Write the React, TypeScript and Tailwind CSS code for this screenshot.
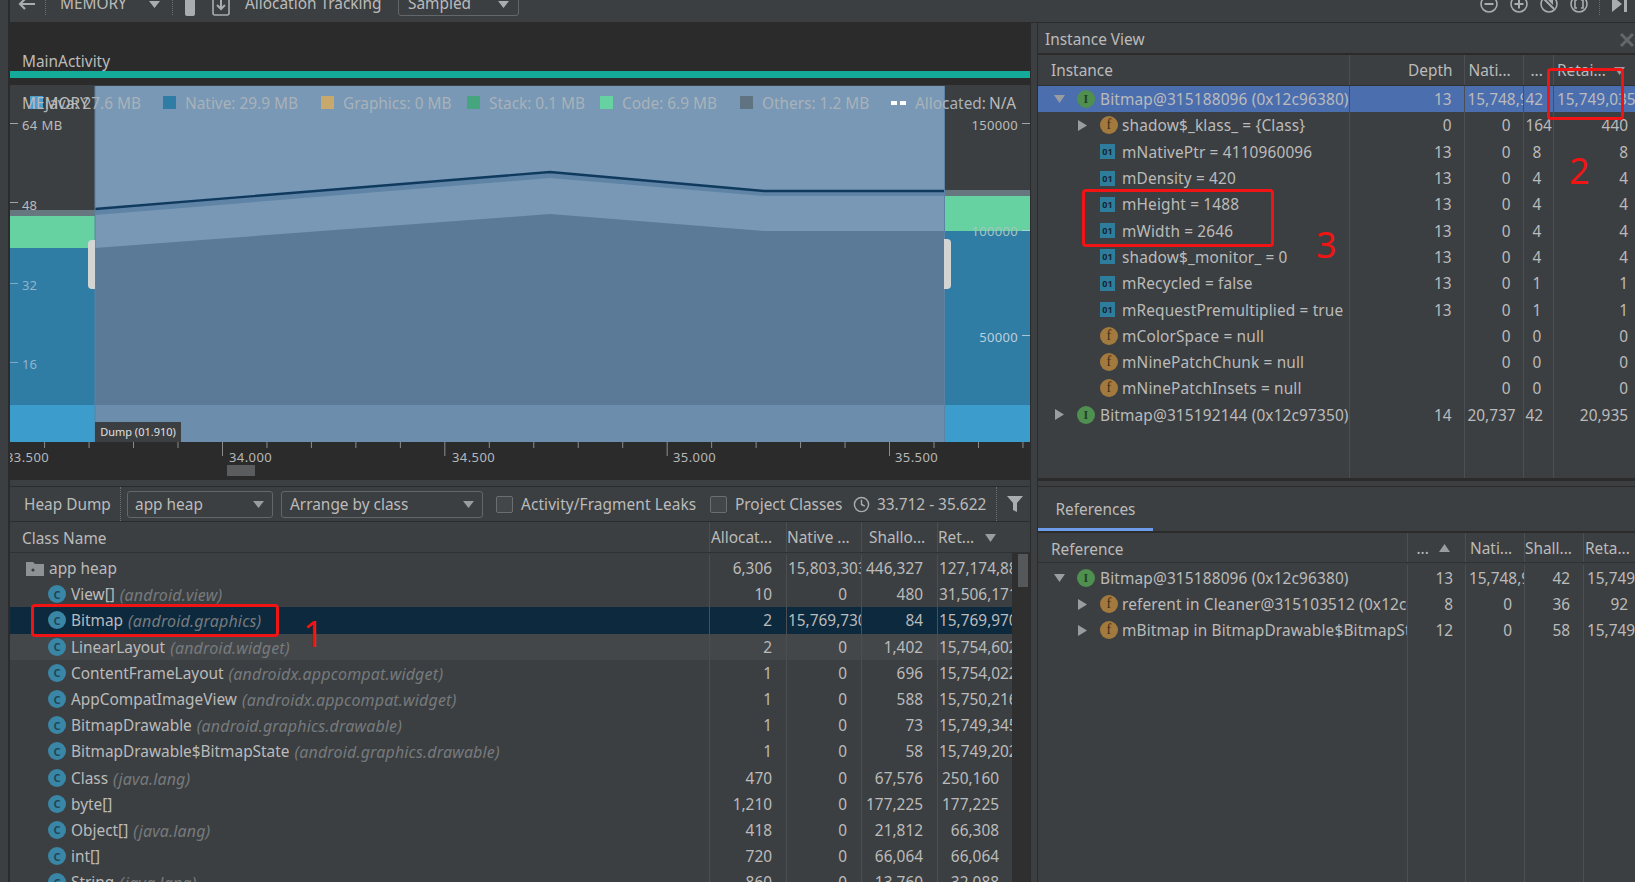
import { clsx } from "clsx";
import type { ReactNode } from "react";
import { Clock } from "lucide-react";

type Kind = "c" | "f" | "i" | "o";

function Tri({ dir, className }: { dir: "d" | "r" | "u"; className?: string }) {
  const pts = dir === "d" ? "0,1 11,1 5.5,9" : dir === "r" ? "1,0 10,5.5 1,11" : "0,9 11,9 5.5,1";
  return (
    <svg viewBox="0 0 11 11" className={clsx("h-[11px] w-[11px] shrink-0", className)}>
      <polygon points={pts} fill="#9a9da0" />
    </svg>
  );
}

function TypeIcon({ kind }: { kind: Kind }) {
  if (kind === "o") {
    return (
      <div className="flex h-[15px] w-[15px] shrink-0 items-center justify-center bg-[#2f7d9c] text-[9px] font-bold leading-none text-[#16262e]">
        01
      </div>
    );
  }
  if (kind === "c") {
    return (
      <div className="flex h-[18px] w-[18px] shrink-0 items-center justify-center rounded-full bg-[#3a86a6] text-[11px] font-bold leading-none text-[#1f4657]">
        C
      </div>
    );
  }
  if (kind === "f") {
    return (
      <div className="flex h-[18px] w-[18px] shrink-0 items-center justify-center rounded-full bg-[#a37a3e] font-['Liberation_Serif',serif] text-[14px] leading-none text-[#3a2c18]">
        f
      </div>
    );
  }
  return (
    <div className="flex h-[18px] w-[18px] shrink-0 items-center justify-center rounded-full bg-[#4f8f4f] font-['Liberation_Serif',serif] text-[12px] font-bold leading-none text-[#223f22]">
      I
    </div>
  );
}

function Cell({ className, left, children }: { className?: string; left?: boolean; children?: ReactNode }) {
  return (
    <div
      className={clsx(
        "flex h-full shrink-0 items-center overflow-hidden whitespace-nowrap border-l border-[#4c4f51] pt-[2px]",
        left ? "justify-start" : "justify-end",
        className,
      )}
    >
      {children}
    </div>
  );
}

const classRows = [
  ["View[]", "(android.view)", "10", "0", "480", "31,506,171"],
  ["Bitmap", "(android.graphics)", "2", "15,769,730", "84", "15,769,970"],
  ["LinearLayout", "(android.widget)", "2", "0", "1,402", "15,754,602"],
  ["ContentFrameLayout", "(androidx.appcompat.widget)", "1", "0", "696", "15,754,022"],
  ["AppCompatImageView", "(androidx.appcompat.widget)", "1", "0", "588", "15,750,216"],
  ["BitmapDrawable", "(android.graphics.drawable)", "1", "0", "73", "15,749,345"],
  ["BitmapDrawable$BitmapState", "(android.graphics.drawable)", "1", "0", "58", "15,749,202"],
  ["Class", "(java.lang)", "470", "0", "67,576", "250,160"],
  ["byte[]", "", "1,210", "0", "177,225", "177,225"],
  ["Object[]", "(java.lang)", "418", "0", "21,812", "66,308"],
  ["int[]", "", "720", "0", "66,064", "66,064"],
  ["String", "(java.lang)", "860", "0", "13,760", "32,088"],
];

function ClassRow({ row, first }: { row: string[]; first?: boolean }) {
  const [name, pkg, alloc, native, shallow, retained] = row;
  const selected = name === "Bitmap";
  const hover = name === "LinearLayout";
  return (
    <div className={clsx("flex h-[26.2px] shrink-0 items-center", selected && "bg-[#0d293e]", hover && "bg-[#44474a]")}>
      <div className="flex h-full w-[699px] shrink-0 items-center whitespace-nowrap">
        {first ? (
          <>
            <svg viewBox="0 0 18 15" className="ml-[16px] h-[15px] w-[18px] shrink-0">
              <path d="M0 1h7l2 2h9v12H0z" fill="#8e9295" />
              <circle cx="7" cy="9" r="1.6" fill="#3c3f41" />
            </svg>
            <span className="ml-[5px] translate-y-px">{name}</span>
          </>
        ) : (
          <>
            <div className="ml-[38px]">
              <TypeIcon kind="c" />
            </div>
            <span className="ml-[5px] translate-y-px">{name}</span>
            {pkg && <span className="ml-[5px] translate-y-px text-[16px] italic tracking-[0.15px] text-[#767a7d]">{pkg}</span>}
          </>
        )}
      </div>
      <Cell className="w-[77px] pr-[14px]">{alloc}</Cell>
      <Cell className={clsx("w-[75px]", native.length > 8 ? "pl-[1px]" : "pr-[14px]")} left={native.length > 8}>
        {native}
      </Cell>
      <Cell className="w-[76px] pr-[14px]">{shallow}</Cell>
      <Cell className={clsx("w-[75px]", retained.length > 8 ? "pl-[1px]" : "pr-[13px]")} left={retained.length > 8}>
        {retained}
      </Cell>
    </div>
  );
}

type TreeRow = {
  level: 0 | 1;
  open?: boolean;
  arrow?: boolean;
  kind: Kind;
  name: string;
  depth?: string;
  native?: string;
  shallow?: string;
  retained?: string;
};

const instanceRows: TreeRow[] = [
  { level: 0, arrow: true, open: true, kind: "i", name: "Bitmap@315188096 (0x12c96380)", depth: "13", native: "15,748,935", shallow: "42", retained: "15,749,035" },
  { level: 1, arrow: true, kind: "f", name: "shadow$_klass_ = {Class}", depth: "0", native: "0", shallow: "164", retained: "440" },
  { level: 1, kind: "o", name: "mNativePtr = 4110960096", depth: "13", native: "0", shallow: "8", retained: "8" },
  { level: 1, kind: "o", name: "mDensity = 420", depth: "13", native: "0", shallow: "4", retained: "4" },
  { level: 1, kind: "o", name: "mHeight = 1488", depth: "13", native: "0", shallow: "4", retained: "4" },
  { level: 1, kind: "o", name: "mWidth = 2646", depth: "13", native: "0", shallow: "4", retained: "4" },
  { level: 1, kind: "o", name: "shadow$_monitor_ = 0", depth: "13", native: "0", shallow: "4", retained: "4" },
  { level: 1, kind: "o", name: "mRecycled = false", depth: "13", native: "0", shallow: "1", retained: "1" },
  { level: 1, kind: "o", name: "mRequestPremultiplied = true", depth: "13", native: "0", shallow: "1", retained: "1" },
  { level: 1, kind: "f", name: "mColorSpace = null", native: "0", shallow: "0", retained: "0" },
  { level: 1, kind: "f", name: "mNinePatchChunk = null", native: "0", shallow: "0", retained: "0" },
  { level: 1, kind: "f", name: "mNinePatchInsets = null", native: "0", shallow: "0", retained: "0" },
  { level: 0, arrow: true, kind: "i", name: "Bitmap@315192144 (0x12c97350)", depth: "14", native: "20,737", shallow: "42", retained: "20,935" },
];

const referenceRows: TreeRow[] = [
  { level: 0, arrow: true, open: true, kind: "i", name: "Bitmap@315188096 (0x12c96380)", depth: "13", native: "15,748,935", shallow: "42", retained: "15,749,035" },
  { level: 1, arrow: true, kind: "f", name: "referent in Cleaner@315103512 (0x12c4f2a8)", depth: "8", native: "0", shallow: "36", retained: "92" },
  { level: 1, arrow: true, kind: "f", name: "mBitmap in BitmapDrawable$BitmapState", depth: "12", native: "0", shallow: "58", retained: "15,749,202" },
];

function TreeName({ row }: { row: TreeRow }) {
  return (
    <div className={clsx("flex items-center whitespace-nowrap tracking-[0.15px]", row.level === 0 ? "pl-[16px]" : "pl-[39px]")}>
      <div className="flex w-[23px] shrink-0">{row.arrow && <Tri dir={row.open ? "d" : "r"} />}</div>
      <TypeIcon kind={row.kind} />
      <span className={clsx("translate-y-px", row.kind === "o" ? "ml-[7px]" : row.kind === "f" ? "ml-[4px]" : "ml-[5px]")}>{row.name}</span>
    </div>
  );
}

function InstanceRow({ row }: { row: TreeRow }) {
  const selected = row.retained === "15,749,035";
  const single = (row.shallow ?? "").length === 1;
  const wide = (row.native ?? "").length >= 6;
  return (
    <div className={clsx("flex h-[26.3px] shrink-0 items-center", selected && "bg-[#4b6eaf]")}>
      <div className="flex h-full w-[310.5px] shrink-0 items-center overflow-hidden">
        <TreeName row={row} />
      </div>
      <Cell className="w-[115px] pr-[12px]">{row.depth}</Cell>
      <Cell className={clsx("w-[59px]", wide ? "pl-[3px]" : "pr-[12px]")} left={wide}>
        {row.native}
      </Cell>
      <Cell className={clsx("w-[30.5px]", single ? "pl-[9px]" : "pl-[2px]")} left>
        {row.shallow}
      </Cell>
      <Cell className={clsx("w-[82px]", selected ? "pl-[3px]" : "pr-[7px]")} left={selected}>
        {row.retained}
      </Cell>
    </div>
  );
}

function ReferenceRow({ row }: { row: TreeRow }) {
  const longRet = (row.retained ?? "").length > 6;
  const wide = (row.native ?? "").length >= 6;
  return (
    <div className="flex h-[26.2px] shrink-0 items-center">
      <div className="flex h-full w-[368.5px] shrink-0 items-center overflow-hidden">
        <TreeName row={row} />
      </div>
      <Cell className="w-[58.5px] pr-[12px]">{row.depth}</Cell>
      <Cell className={clsx("w-[59px]", wide ? "pl-[3px]" : "pr-[12px]")} left={wide}>
        {row.native}
      </Cell>
      <Cell className="w-[59px] pr-[13px]">{row.shallow}</Cell>
      <Cell className={clsx("w-[52px]", longRet ? "pl-[3px]" : "pr-[7px]")} left={longRet}>
        {row.retained}
      </Cell>
    </div>
  );
}

function RoundIcon({ children }: { children: ReactNode }) {
  return (
    <svg viewBox="0 0 18 18" className="h-[18px] w-[18px] shrink-0" fill="none" stroke="#a9adb0" strokeWidth="1.6">
      <circle cx="9" cy="9" r="8" />
      {children}
    </svg>
  );
}

function TopBar() {
  return (
    <div className="flex h-[23px] shrink-0 overflow-hidden border-b border-[#2b2b2b]">
      <div className="flex h-[8px] w-full items-center">
        <svg viewBox="0 0 18 12" className="ml-[8px] h-[12px] w-[18px] shrink-0">
          <path d="M7 1 2 6l5 5M2 6h15" fill="none" stroke="#a9adb0" strokeWidth="2.2" />
        </svg>
        <div className="ml-[9px] h-[22px] border-l border-dotted border-[#6b6e70]" />
        <span className="ml-[14px] w-[69px] whitespace-nowrap">MEMORY</span>
        <svg viewBox="0 0 11 7" className="ml-[20px] h-[7px] w-[11px] shrink-0">
          <polygon points="0,0 11,0 5.5,7" fill="#a9adb0" />
        </svg>
        <div className="ml-[12px] h-[22px] border-l border-dotted border-[#6b6e70]" />
        <div className="ml-[12px] h-[24px] w-[10px] shrink-0 rounded-b-[2px] bg-[#a9adb0]" />
        <svg viewBox="0 0 18 24" className="ml-[17px] h-[24px] w-[18px] shrink-0" fill="none" stroke="#a9adb0">
          <path d="M1 6v15a2 2 0 0 0 2 2h12a2 2 0 0 0 2-2V6" strokeWidth="1.6" />
          <path d="M9 6v11M5 13l4 4 4-4" strokeWidth="2" />
        </svg>
        <span className="ml-[15px] w-[139px] whitespace-nowrap">Allocation Tracking</span>
        <div className="ml-[14px] flex h-[24px] w-[121px] shrink-0 items-center rounded-[3px] border border-[#646769] pl-[9px] pr-[9px]">
          <span className="flex-1">Sampled</span>
          <svg viewBox="0 0 11 7" className="h-[7px] w-[11px]">
            <polygon points="0,0 11,0 5.5,7" fill="#a9adb0" />
          </svg>
        </div>
        <div className="ml-auto flex items-center gap-[12px]">
          <RoundIcon>
            <path d="M4.5 9h9" strokeWidth="2" />
          </RoundIcon>
          <RoundIcon>
            <path d="M4.5 9h9M9 4.5v9" strokeWidth="2" />
          </RoundIcon>
          <RoundIcon>
            <path d="M4 4l10 10" strokeWidth="2" />
            <path d="M7 4h6v6z" fill="#a9adb0" stroke="none" />
          </RoundIcon>
          <RoundIcon>
            <path d="M7 5H5v8h2M11 5h2v8h-2" strokeWidth="1.6" />
          </RoundIcon>
        </div>
        <div className="ml-[11px] h-[22px] border-l border-dotted border-[#6b6e70]" />
        <svg viewBox="0 0 16 16" className="ml-[12px] mr-[7px] h-[16px] w-[16px] shrink-0">
          <path d="M0 0l10 8-10 8z" fill="#a9adb0" />
          <rect x="12" y="0" width="3" height="16" fill="#a9adb0" />
        </svg>
      </div>
    </div>
  );
}

function LegendItem({ swatch, width, children }: { swatch: string; width: string; children: ReactNode }) {
  return (
    <div className={clsx("flex items-center whitespace-nowrap", width)}>
      <div className={clsx("-mt-[3px] h-[13px] w-[13px] shrink-0", swatch)} />
      {children}
    </div>
  );
}

function MemoryChart() {
  return (
    <div className="relative h-[356px] shrink-0 overflow-hidden text-[#aab2b9]">
      <svg viewBox="0 0 1020 356" className="absolute inset-0 h-full w-full">
        <rect x="0" y="124" width="85" height="6" fill="#66777f" />
        <rect x="0" y="130" width="85" height="32" fill="#66d1a1" />
        <rect x="0" y="162" width="85" height="157" fill="#2f7ca5" />
        <rect x="0" y="319" width="85" height="37" fill="#3c9ccb" />
        <rect x="934" y="104" width="86" height="6" fill="#66777f" />
        <rect x="934" y="110" width="86" height="35" fill="#66d1a1" />
        <rect x="934" y="145" width="86" height="174" fill="#2f7ca5" />
        <rect x="934" y="319" width="86" height="37" fill="#3c9ccb" />
        <rect x="85" y="0" width="849" height="356" fill="#7898b5" />
        <polygon points="85,123 540,86 754,105 934,105 934,110 754,110 540,92 85,129" fill="#5f84a6" />
        <polygon points="85,162 540,128 754,145 934,145 934,319 85,319" fill="#5a7a97" />
        <rect x="85" y="319" width="849" height="37" fill="#6c8eac" />
        <polyline points="85,123 540,86 754,105 934,105" fill="none" stroke="#0f3a5e" strokeWidth="2.4" />
        <path d="M85 0v356M934.5 0v356" stroke="#5c82a4" />
      </svg>

      <div className="absolute left-[20px] top-[8px] flex items-center">
        <LegendItem swatch="mr-[2px] bg-[#4a9fcf]" width="w-[133px]">Java: 27.6 MB</LegendItem>
        <LegendItem swatch="mr-[9px] bg-[#2f7ca5]" width="w-[158px]">Native: 29.9 MB</LegendItem>
        <LegendItem swatch="mr-[9px] bg-[#c8a86b]" width="w-[146px]">Graphics: 0 MB</LegendItem>
        <LegendItem swatch="mr-[9px] bg-[#45a57f]" width="w-[133px]">Stack: 0.1 MB</LegendItem>
        <LegendItem swatch="mr-[9px] bg-[#66d1a1]" width="w-[140px]">Code: 6.9 MB</LegendItem>
        <LegendItem swatch="mr-[9px] bg-[#5f7480]" width="w-[151px]">Others: 1.2 MB</LegendItem>
        <div className="flex items-center whitespace-nowrap">
          <div className="-mt-[3px] mr-[9px] flex gap-[3px]">
            <div className="h-[4px] w-[6px] bg-white" />
            <div className="h-[4px] w-[6px] bg-white" />
          </div>
          Allocated:<span className="ml-[3px] text-[#bbbbbb]">N/A</span>
        </div>
      </div>
      <span className="absolute left-[12px] top-[8px] text-[#bbbbbb]">MEMORY</span>

      <div className="absolute left-0 top-[37px] h-px w-[8px] bg-[#a2a5a8]" />
      <span className="absolute left-[12px] top-[29px] text-[13px] tracking-[0.4px] text-[#bbbbbb]">64 MB</span>
      <div className="absolute left-0 top-[116px] h-px w-[8px] bg-[#a2a5a8]" />
      <span className="absolute left-[12px] top-[109px] text-[13px] text-[#bbbbbb]">48</span>
      <div className="absolute left-0 top-[197px] h-px w-[8px] bg-[#7fa9c4]" />
      <span className="absolute left-[12px] top-[189px] text-[13px] text-[#8fb5cd]">32</span>
      <div className="absolute left-0 top-[276px] h-px w-[8px] bg-[#7fa9c4]" />
      <span className="absolute left-[12px] top-[268px] text-[13px] text-[#8fb5cd]">16</span>

      <div className="absolute right-0 top-[37px] h-px w-[8px] bg-[#a2a5a8]" />
      <span className="absolute right-[12px] top-[29px] text-[13px] tracking-[0.3px] text-[#bbbbbb]">150000</span>
      <div className="absolute right-0 top-[144px] h-px w-[8px] bg-[#a5d8d0]" />
      <span className="absolute right-[12px] top-[135px] text-[13px] tracking-[0.3px] text-[#a5c6c0]">100000</span>
      <div className="absolute right-0 top-[249px] h-px w-[8px] bg-[#a5c6d8]" />
      <span className="absolute right-[12px] top-[241px] text-[13px] tracking-[0.3px] text-[#bcd0dc]">50000</span>

      <div className="absolute left-[78px] top-[154px] h-[49px] w-[7px] rounded-l-[4px] bg-[#d4d4d4]" />
      <div className="absolute left-[934px] top-[153px] h-[50px] w-[7px] rounded-r-[4px] bg-[#d4d4d4]" />
      <div className="absolute bottom-0 left-[85px] flex h-[20px] w-[86px] items-center justify-center bg-[#3c3f41] text-[11px] text-[#e0e0e0]">
        Dump (01.910)
      </div>
    </div>
  );
}

function Ruler() {
  const ticks = Array.from({ length: 23 }, (_, i) => i * 44.47 + 34.6);
  return (
    <div className="relative h-[38px] shrink-0 overflow-hidden bg-[#2b2b2b] text-[13px] tracking-[0.4px] text-[#b4b8bb]">
      <svg viewBox="0 0 1020 38" className="absolute inset-0 h-full w-full">
        {ticks.map((x, i) => (
          <line key={x} x1={x} x2={x} y1="0" y2={i % 5 === 4 ? 14 : 6} stroke="#8b8e91" />
        ))}
      </svg>
      <span className="absolute left-[-4px] top-[5px]">33.500</span>
      <span className="absolute left-[219px] top-[5px]">34.000</span>
      <span className="absolute left-[442px] top-[5px]">34.500</span>
      <span className="absolute left-[663px] top-[5px]">35.000</span>
      <span className="absolute left-[885px] top-[5px]">35.500</span>
      <div className="absolute left-[217px] top-[23px] h-[11px] w-[28px] bg-[#5a5c5e]" />
    </div>
  );
}

function HeapBar() {
  return (
    <div className="flex h-[35px] shrink-0 items-center whitespace-nowrap border-b border-[#2b2b2b]">
      <span className="ml-[14px] w-[87px] translate-y-px">Heap Dump</span>
      <div className="ml-[9px] h-full border-l border-dotted border-[#6b6e70]" />
      <div className="ml-[6px] flex h-[27px] w-[146px] shrink-0 items-center rounded-[3px] border border-[#646769] pl-[7px] pr-[8px]">
        <span className="flex-1 translate-y-px">app heap</span>
        <svg viewBox="0 0 11 7" className="h-[7px] w-[11px]">
          <polygon points="0,0 11,0 5.5,7" fill="#9a9da0" />
        </svg>
      </div>
      <div className="ml-[8px] flex h-[27px] w-[202px] shrink-0 items-center rounded-[3px] border border-[#646769] pl-[8px] pr-[8px]">
        <span className="flex-1 translate-y-px">Arrange by class</span>
        <svg viewBox="0 0 11 7" className="h-[7px] w-[11px]">
          <polygon points="0,0 11,0 5.5,7" fill="#9a9da0" />
        </svg>
      </div>
      <div className="ml-[13px] h-[17px] w-[17px] shrink-0 rounded-[2px] border border-[#6b6e70] bg-[#43474a]" />
      <span className="ml-[8px] w-[175px] translate-y-px tracking-[0.1px]">Activity/Fragment Leaks</span>
      <div className="ml-[14px] h-[17px] w-[17px] shrink-0 rounded-[2px] border border-[#6b6e70] bg-[#43474a]" />
      <span className="ml-[8px] w-[108px] translate-y-px">Project Classes</span>
      <Clock className="ml-[10px] h-[17px] w-[17px] shrink-0 text-[#a9adb0]" strokeWidth={2} />
      <span className="ml-[7px] w-[111px] translate-y-px">33.712 - 35.622</span>
      <div className="ml-[8px] h-full border-l border-dotted border-[#6b6e70]" />
      <svg viewBox="0 0 16 16" className="ml-[10px] h-[16px] w-[16px] shrink-0">
        <path d="M0 0h16l-6 7v9l-4-2V7z" fill="#a9adb0" />
      </svg>
    </div>
  );
}

function ClassTable() {
  return (
    <>
      <div className="flex h-[31px] shrink-0 items-center whitespace-nowrap border-b border-[#2f3133]">
        <div className="w-[699px] shrink-0 pl-[12px] pt-[4px]">Class Name</div>
        <Cell className="h-[27px] w-[77px] pl-[1px]" left>Allocat...</Cell>
        <Cell className="h-[27px] w-[75px] pl-0" left>Native ...</Cell>
        <Cell className="h-[27px] w-[76px] pl-[7px]" left>Shallo...</Cell>
        <Cell className="h-[27px] w-[93px] pl-0" left>
          Ret...
          <Tri dir="d" className="ml-[11px]" />
        </Cell>
      </div>
      <div className="flex min-h-0 flex-1 overflow-hidden">
        <div className="flex w-[1002px] shrink-0 flex-col pt-[2px]">
          <ClassRow first row={["app heap", "", "6,306", "15,803,303", "446,327", "127,174,882"]} />
          {classRows.map((r) => (
            <ClassRow key={r[0]} row={r} />
          ))}
        </div>
        <div className="w-[18px] shrink-0 bg-[#2f2f2f] pl-[6px] pt-px">
          <div className="h-[33px] w-[10px] bg-[#55585a]" />
        </div>
      </div>
    </>
  );
}

function InstancePanel() {
  return (
    <div className="flex h-[458px] shrink-0 flex-col border-b-[3px] border-[#2b2b2b]">
      <div className="flex h-[32px] shrink-0 items-center justify-between border-b-2 border-[#2b2b2b] pl-[7px] pt-[3px]">
        <span>Instance View</span>
        <svg viewBox="0 0 14 14" className="mr-[1px] h-[14px] w-[14px]" stroke="#63676a" strokeWidth="3">
          <path d="M1 1l12 12M13 1 1 13" />
        </svg>
      </div>
      <div className="flex h-[31px] shrink-0 items-center whitespace-nowrap border-b border-[#2f3133]">
        <div className="w-[310.5px] shrink-0 pl-[13px] pt-[2px]">Instance</div>
        <Cell className="h-[27px] w-[115px] pr-[11px]">Depth</Cell>
        <Cell className="h-[27px] w-[59px] pl-[4px]" left>Nati...</Cell>
        <Cell className="h-[27px] w-[30.5px] pl-[7px]" left>...</Cell>
        <Cell className="h-[27px] w-[82px] pl-[3px]" left>
          Retai...
          <Tri dir="d" className="ml-[8px]" />
        </Cell>
      </div>
      <div className="flex min-h-0 flex-1 flex-col overflow-hidden">
        {instanceRows.map((r) => (
          <InstanceRow key={r.name} row={r} />
        ))}
        <div className="flex min-h-0 flex-1">
          <div className="w-[310.5px] shrink-0" />
          <Cell className="w-[115px]" />
          <Cell className="w-[59px]" />
          <Cell className="w-[30.5px]" />
          <Cell className="w-[82px]" />
        </div>
      </div>
    </div>
  );
}

function ReferencePanel() {
  return (
    <div className="mt-[5px] flex min-h-0 flex-1 flex-col border-t border-[#2b2b2b]">
      <div className="flex h-[46px] shrink-0 border-b-2 border-[#2b2b2b]">
        <div className="flex w-[115px] items-center justify-center border-b-[3px] border-[#6d9de8] pt-[4px]">References</div>
      </div>
      <div className="flex h-[30px] shrink-0 items-center whitespace-nowrap border-b border-[#2f3133]">
        <div className="w-[368.5px] shrink-0 pl-[13px] pt-[4px]">Reference</div>
        <Cell className="h-[27px] w-[58.5px] pl-[9px]" left>
          ...
          <Tri dir="u" className="ml-[10px]" />
        </Cell>
        <Cell className="h-[27px] w-[59px] pl-[4px]" left>Nati...</Cell>
        <Cell className="h-[27px] w-[59px] pl-0" left>Shall...</Cell>
        <Cell className="h-[27px] w-[52px] pl-[1px]" left>Reta...</Cell>
      </div>
      <div className="flex min-h-0 flex-1 flex-col overflow-hidden pt-[2px]">
        {referenceRows.map((r) => (
          <ReferenceRow key={r.name} row={r} />
        ))}
        <div className="flex min-h-0 flex-1">
          <div className="w-[368.5px] shrink-0" />
          <Cell className="w-[58.5px]" />
          <Cell className="w-[59px]" />
          <Cell className="w-[59px]" />
          <Cell className="w-[52px]" />
        </div>
      </div>
    </div>
  );
}

export default function App() {
  return (
    <div className="relative flex h-[882px] w-[1635px] overflow-hidden bg-[#3c3f41] font-['Noto_Sans',sans-serif] text-[15.4px] leading-[20px] text-[#bbbbbb]">
      <div className="w-[10px] shrink-0 border-r-2 border-[#2b2b2b]" />
      <div className="flex min-w-0 flex-1 flex-col">
        <TopBar />
        <div className="flex min-h-0 flex-1">
          <div className="flex w-[1020px] shrink-0 flex-col">
            <div className="flex h-[62px] shrink-0 flex-col justify-end bg-[#2b2b2b] pb-[7px]">
              <span className="-mb-[1px] pl-[12px]">MainActivity</span>
              <div className="h-[7px] shrink-0 bg-[#14ab9a]" />
            </div>
            <div className="h-px shrink-0 bg-[#3c3f41]" />
            <MemoryChart />
            <Ruler />
            <div className="h-[6px] shrink-0" />
            <div className="h-px shrink-0 bg-[#2b2b2b]" />
            <HeapBar />
            <ClassTable />
          </div>
          <div className="w-[8px] shrink-0 border-x border-[#2b2b2b]" />
          <div className="flex w-[597px] shrink-0 flex-col">
            <InstancePanel />
            <ReferencePanel />
          </div>
        </div>
      </div>

      <div className="absolute left-[31px] top-[604px] h-[33px] w-[248px] rounded-[4px] border-[3px] border-[#f01414]" />
      <span className="absolute left-[303px] top-[611px] text-[36px] leading-[46px] text-[#f01414]">1</span>
      <div className="absolute left-[1547px] top-[68px] h-[52px] w-[77px] rounded-[4px] border-[3px] border-[#f01414]" />
      <span className="absolute left-[1569px] top-[148px] text-[36px] leading-[46px] text-[#f01414]">2</span>
      <div className="absolute left-[1082px] top-[189px] h-[58px] w-[192px] rounded-[4px] border-[3px] border-[#f01414]" />
      <span className="absolute left-[1316px] top-[222px] text-[36px] leading-[46px] text-[#f01414]">3</span>
    </div>
  );
}
